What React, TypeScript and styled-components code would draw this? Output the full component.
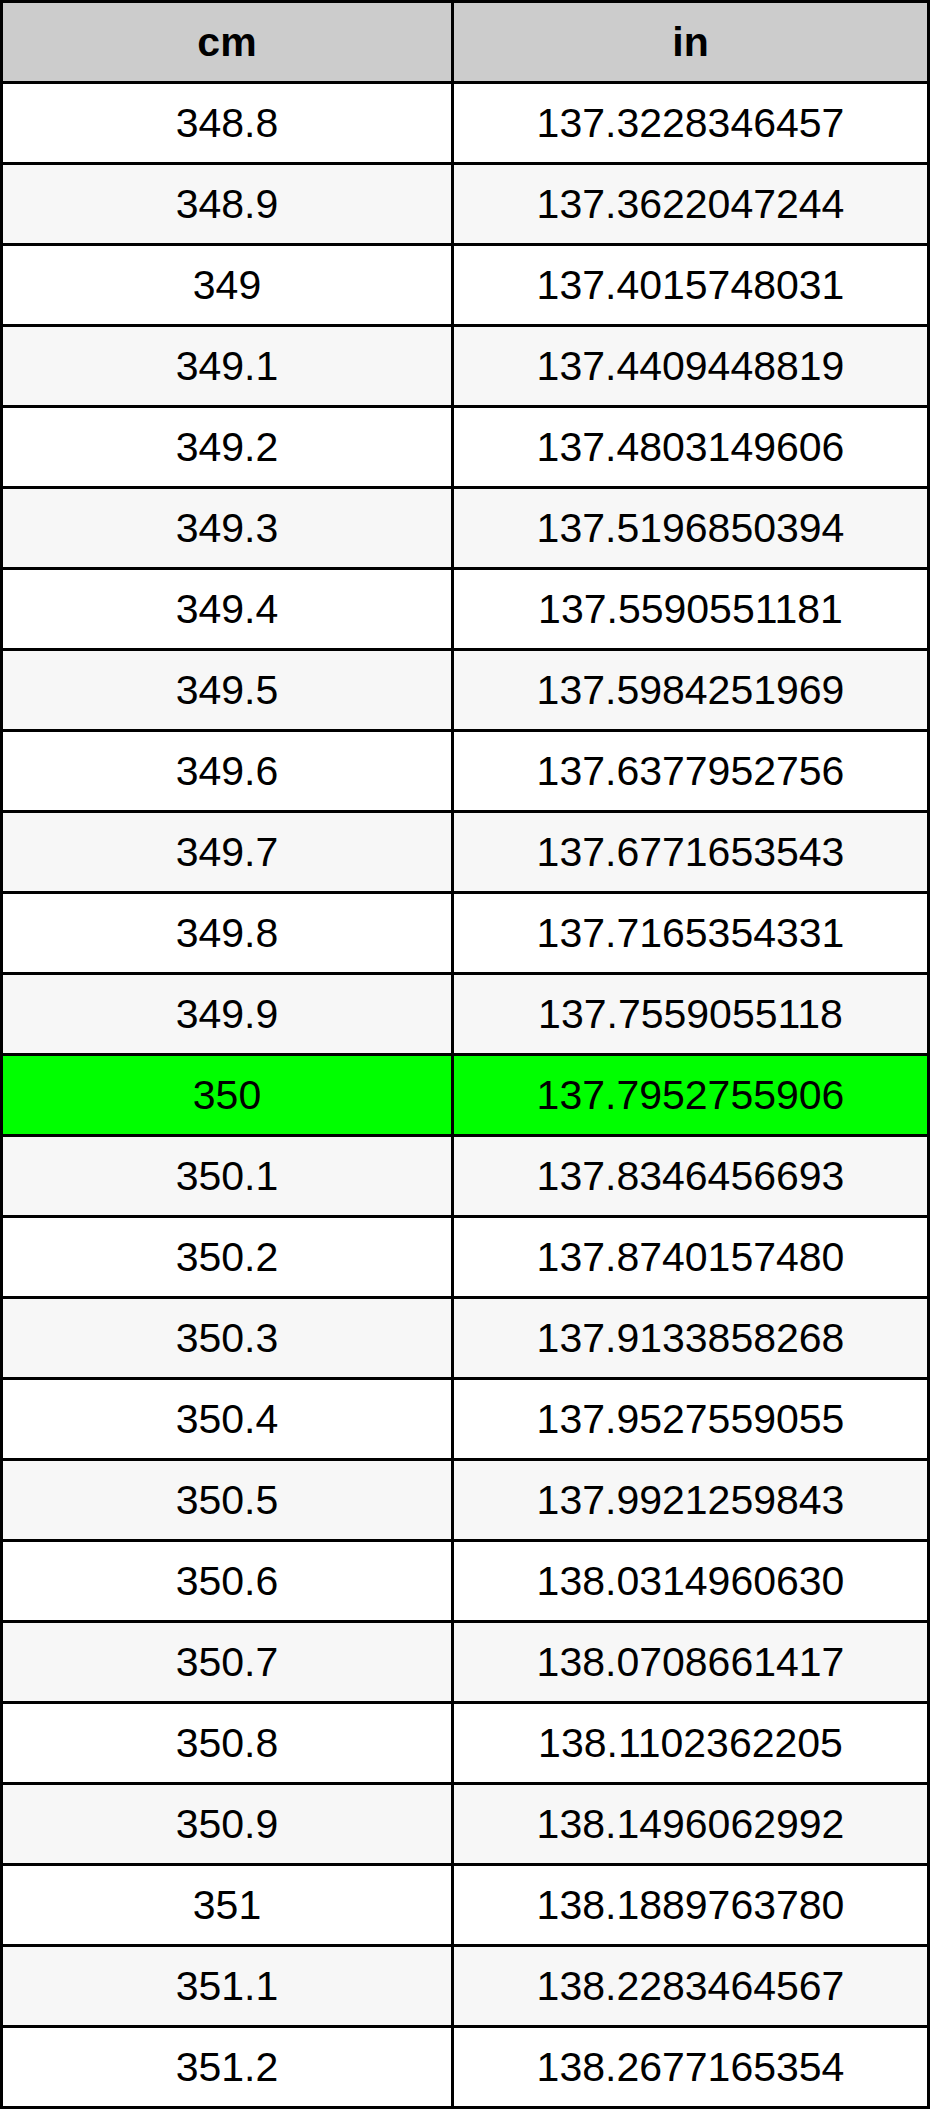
import React from 'react';
import styled, { createGlobalStyle } from 'styled-components';

const GlobalStyle = createGlobalStyle`
    html, body {
        margin: 0;
        padding: 0;
        background: #ffffff;
    }
    body {
        font-family: "Liberation Sans", Arial, Helvetica, sans-serif;
        color: #000000;
    }
`;

const Tabell = styled.table`
    width: 930px;
    border-collapse: collapse;
    table-layout: fixed;
    border: 3px solid #000000;

    th,
    td {
        border: 3px solid #000000;
        height: 78px;
        padding: 0;
        text-align: center;
        vertical-align: middle;
        font-size: 41px;
        line-height: 1;
    }
`;

const Hode = styled.th`
    background: #cccccc;
    font-weight: bold;
`;

const Rad = styled.tr<{ $markert: boolean; $stripet: boolean }>`
    td {
        background: ${(p) => (p.$markert ? '#00ff00' : p.$stripet ? '#f7f7f7' : '#ffffff')};
    }
`;

const rader: [string, string][] = [
    ['348.8', '137.3228346457'],
    ['348.9', '137.3622047244'],
    ['349', '137.4015748031'],
    ['349.1', '137.4409448819'],
    ['349.2', '137.4803149606'],
    ['349.3', '137.5196850394'],
    ['349.4', '137.5590551181'],
    ['349.5', '137.5984251969'],
    ['349.6', '137.6377952756'],
    ['349.7', '137.6771653543'],
    ['349.8', '137.7165354331'],
    ['349.9', '137.7559055118'],
    ['350', '137.7952755906'],
    ['350.1', '137.8346456693'],
    ['350.2', '137.8740157480'],
    ['350.3', '137.9133858268'],
    ['350.4', '137.9527559055'],
    ['350.5', '137.9921259843'],
    ['350.6', '138.0314960630'],
    ['350.7', '138.0708661417'],
    ['350.8', '138.1102362205'],
    ['350.9', '138.1496062992'],
    ['351', '138.1889763780'],
    ['351.1', '138.2283464567'],
    ['351.2', '138.2677165354'],
];

export default function App() {
    return (
        <>
            <GlobalStyle />
            <Tabell>
                <colgroup>
                    <col style={{ width: '451px' }} />
                    <col />
                </colgroup>
                <thead>
                    <tr>
                        <Hode>cm</Hode>
                        <Hode>in</Hode>
                    </tr>
                </thead>
                <tbody>
                    {rader.map(([cm, tommer], i) => (
                        <Rad key={cm} $markert={cm === '350'} $stripet={i % 2 === 1}>
                            <td>{cm}</td>
                            <td>{tommer}</td>
                        </Rad>
                    ))}
                </tbody>
            </Tabell>
        </>
    );
}
